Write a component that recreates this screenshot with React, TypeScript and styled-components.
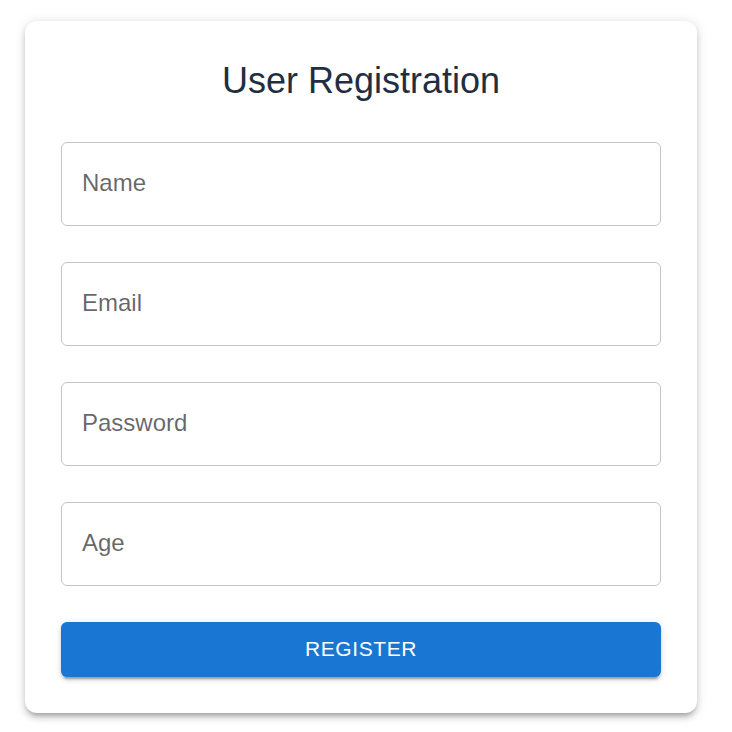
import styled, { createGlobalStyle } from 'styled-components'

const GlobalStyle = createGlobalStyle`
  html, body {
    margin: 0;
    padding: 0;
    background: #ffffff;
  }
  body {
    font-family: "Liberation Sans", Arial, sans-serif;
  }
`

const Page = styled.div`
  padding: 21px 0 19px 25px;
`

const Card = styled.form`
  box-sizing: border-box;
  width: 672px;
  padding: 36px;
  background: #ffffff;
  border-radius: 12px;
  box-shadow: 0px 4.5px 4.5px -3px rgba(0, 0, 0, 0.2),
    0px 4.5px 6px 0px rgba(0, 0, 0, 0.14),
    0px 1.5px 12px 0px rgba(0, 0, 0, 0.12);
  display: flex;
  flex-direction: column;
`

const Title = styled.h1`
  margin: 0 0 12.6px;
  font-size: 36px;
  font-weight: 400;
  line-height: 48px;
  text-align: center;
  color: #1f2e40;
`

const Field = styled.input`
  box-sizing: border-box;
  width: 100%;
  height: 84px;
  margin: 24px 0 12px;
  padding: 0 20px 2px;
  font-family: inherit;
  font-size: 24px;
  color: rgba(0, 0, 0, 0.87);
  background: transparent;
  border: 1px solid rgba(0, 0, 0, 0.23);
  border-radius: 6px;
  outline: none;

  &::placeholder {
    color: rgba(0, 0, 0, 0.6);
    opacity: 1;
  }
`

const SubmitButton = styled.button`
  height: 55px;
  margin-top: 24px;
  border: none;
  border-radius: 6px;
  background: #1976d2;
  color: #ffffff;
  font-family: inherit;
  font-size: 21px;
  font-weight: 400;
  letter-spacing: 0.02857em;
  text-transform: uppercase;
  cursor: pointer;
  box-shadow: 0px 4.5px 1.5px -3px rgba(0, 0, 0, 0.2),
    0px 3px 3px 0px rgba(0, 0, 0, 0.14),
    0px 1.5px 7.5px 0px rgba(0, 0, 0, 0.12);
`

const fields = [
  { name: 'name', label: 'Name', type: 'text' },
  { name: 'email', label: 'Email', type: 'email' },
  { name: 'password', label: 'Password', type: 'password' },
  { name: 'age', label: 'Age', type: 'number' },
]

export default function App() {
  return (
    <>
      <GlobalStyle />
      <Page>
        <Card onSubmit={(e) => e.preventDefault()}>
          <Title>User Registration</Title>
          {fields.map((f) => (
            <Field key={f.name} name={f.name} type={f.type} placeholder={f.label} />
          ))}
          <SubmitButton type="submit">Register</SubmitButton>
        </Card>
      </Page>
    </>
  )
}
